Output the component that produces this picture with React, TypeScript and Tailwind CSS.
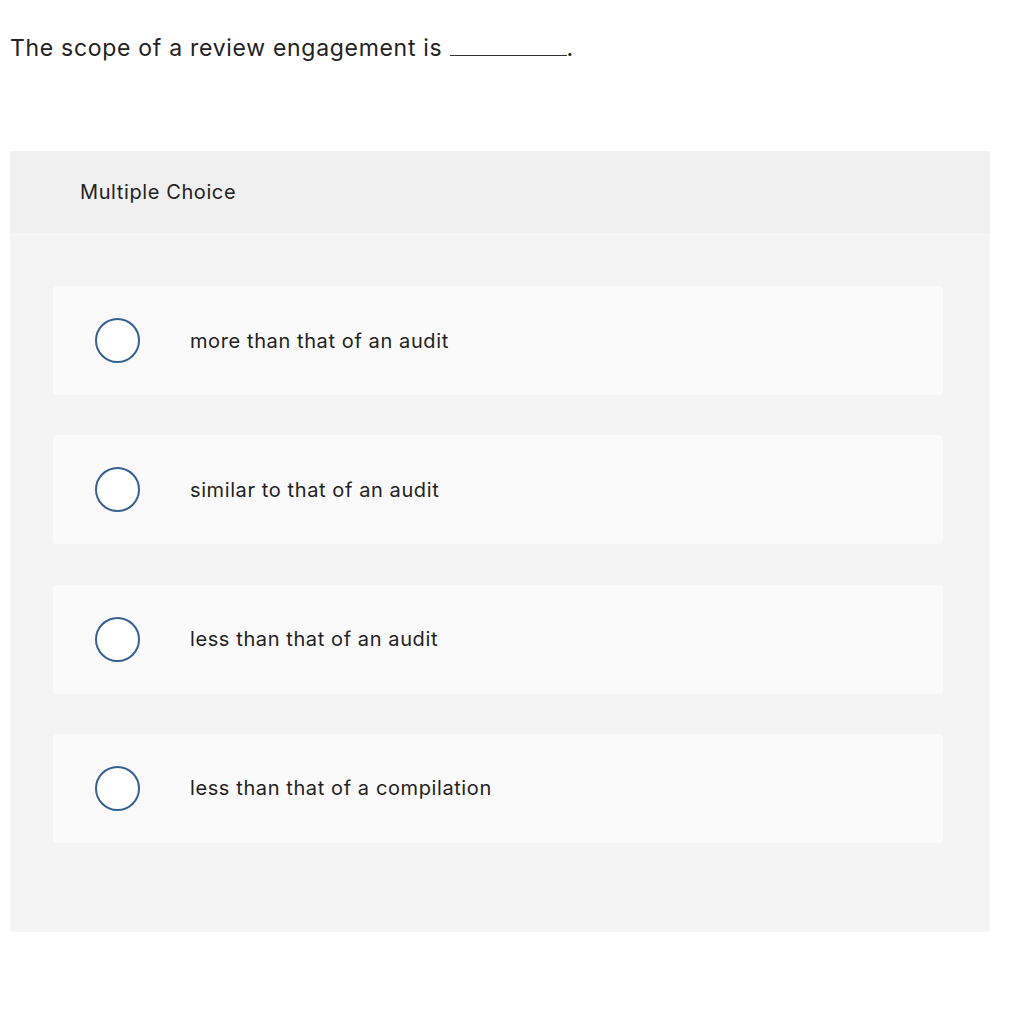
const OPTIONS = [
  'more than that of an audit',
  'similar to that of an audit',
  'less than that of an audit',
  'less than that of a compilation',
]

export default function App() {
  return (
    <div className="min-h-[1024px] w-[1017px] bg-white font-['Inter',sans-serif] text-[#222]">
      <p className="pl-[10px] pt-[33px] text-[23px] leading-[30px] tracking-[0.7px]">
        The scope of a review engagement is{' '}
        <span className="inline-block w-[117px] border-b border-[#333] align-baseline"></span>.
      </p>
      <div className="ml-[10px] mt-[88px] w-[980px] overflow-hidden rounded bg-[#f4f4f4]">
        <div className="flex h-[82px] items-center bg-[#f0f0f0] pl-[70px] text-[20px] tracking-[0.6px]">
          Multiple Choice
        </div>
        <div className="flex flex-col gap-[40.3px] pb-[89px] pl-[43px] pr-[47px] pt-[53px]">
          {OPTIONS.map((o) => (
            <div key={o} className="flex h-[109px] items-center rounded bg-[#fafafa]">
              <span className="ml-[42px] h-[45px] w-[45px] rounded-full border-2 border-[#35608f] bg-white"></span>
              <span className="ml-[50px] text-[20px] tracking-[0.6px]">{o}</span>
            </div>
          ))}
        </div>
      </div>
    </div>
  )
}
